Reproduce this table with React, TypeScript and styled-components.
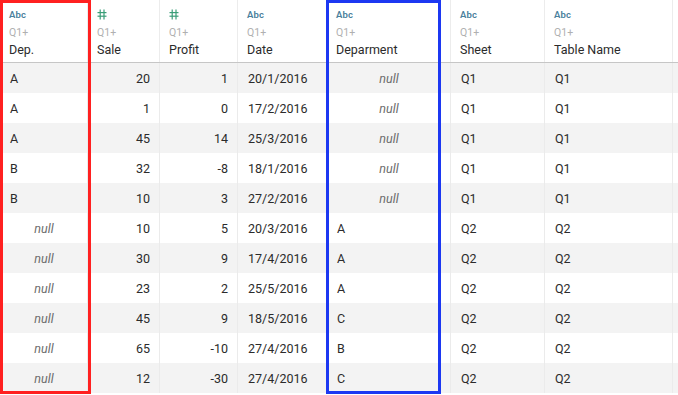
import styled, { createGlobalStyle } from "styled-components"

const GlobalStyle = createGlobalStyle`
  html, body {
    margin: 0;
    padding: 0;
    background: #ffffff;
    overflow: hidden;
  }
  body {
    font-family: Roboto, "Liberation Sans", Arial, sans-serif;
  }
`

const columnWidths = "88px 72px 78px 89px 124px 94px 128px 1fr"

type Kind = "text" | "number"

interface Column {
  name: string
  kind: Kind
}

const columns: Column[] = [
  { name: "Dep.", kind: "text" },
  { name: "Sale", kind: "number" },
  { name: "Profit", kind: "number" },
  { name: "Date", kind: "text" },
  { name: "Deparment", kind: "text" },
  { name: "Sheet", kind: "text" },
  { name: "Table Name", kind: "text" },
]

const rows: (string | null)[][] = [
  ["A", "20", "1", "20/1/2016", null, "Q1", "Q1"],
  ["A", "1", "0", "17/2/2016", null, "Q1", "Q1"],
  ["A", "45", "14", "25/3/2016", null, "Q1", "Q1"],
  ["B", "32", "-8", "18/1/2016", null, "Q1", "Q1"],
  ["B", "10", "3", "27/2/2016", null, "Q1", "Q1"],
  [null, "10", "5", "20/3/2016", "A", "Q2", "Q2"],
  [null, "30", "9", "17/4/2016", "A", "Q2", "Q2"],
  [null, "23", "2", "25/5/2016", "A", "Q2", "Q2"],
  [null, "45", "9", "18/5/2016", "C", "Q2", "Q2"],
  [null, "65", "-10", "27/4/2016", "B", "Q2", "Q2"],
  [null, "12", "-30", "27/4/2016", "C", "Q2", "Q2"],
]

const Page = styled.div`
  position: relative;
  width: 678px;
  height: 395px;
  overflow: hidden;
`

const HeaderRow = styled.div`
  display: grid;
  grid-template-columns: ${columnWidths};
  height: 62px;
  border-bottom: 1px solid #c6c6c6;
  background: #ffffff;
`

const HeaderCell = styled.div<{ $last?: boolean }>`
  display: flex;
  flex-direction: column;
  padding: 8px 0 0 9px;
  border-right: ${(p) => (p.$last ? "none" : "1px solid #ececec")};
`

const TypeLabel = styled.div`
  height: 12px;
  display: flex;
  align-items: center;
  font-size: 9.5px;
  font-weight: 600;
  letter-spacing: 0.2px;
  color: #4a7f9c;
`

const Role = styled.div`
  margin-top: 7px;
  font-size: 10.5px;
  line-height: 12px;
  color: #b0b0b0;
`

const FieldName = styled.div`
  margin-top: 3px;
  font-size: 12.5px;
  line-height: 16px;
  color: #2b2b2b;
`

const Row = styled.div<{ $shaded: boolean }>`
  display: grid;
  grid-template-columns: ${columnWidths};
  height: 30px;
  background: ${(p) => (p.$shaded ? "#f3f3f3" : "#ffffff")};
`

const Cell = styled.div<{ $align: "left" | "right" | "center"; $last?: boolean }>`
  display: flex;
  align-items: center;
  justify-content: ${(p) =>
    p.$align === "right" ? "flex-end" : p.$align === "center" ? "center" : "flex-start"};
  padding: 0 9px 0 10px;
  font-size: 12.5px;
  color: #2b2b2b;
  border-right: ${(p) => (p.$last ? "none" : "1px solid #ebebeb")};
  white-space: nowrap;
`

const Null = styled.span`
  font-style: italic;
  color: #6c6c6c;
`

const Highlight = styled.div<{ $color: string; $left: number; $width: number }>`
  position: absolute;
  top: 0;
  left: ${(p) => p.$left}px;
  width: ${(p) => p.$width}px;
  height: 394px;
  box-sizing: border-box;
  border: 3px solid ${(p) => p.$color};
  pointer-events: none;
`

const HashIcon = () => (
  <svg width="10" height="11" viewBox="0 0 10 11">
    <g stroke="#3a9e78" strokeWidth="1.2" fill="none">
      <line x1="3.2" y1="0.5" x2="3.2" y2="10.5" />
      <line x1="7" y1="0.5" x2="7" y2="10.5" />
      <line x1="0.5" y1="3.6" x2="9.5" y2="3.6" />
      <line x1="0.5" y1="7.2" x2="9.5" y2="7.2" />
    </g>
  </svg>
)

const App = () => {
  return (
    <Page>
      <GlobalStyle />
      <HeaderRow>
        {columns.map((c) => (
          <HeaderCell key={c.name}>
            <TypeLabel>{c.kind === "number" ? <HashIcon /> : "Abc"}</TypeLabel>
            <Role>Q1+</Role>
            <FieldName>{c.name}</FieldName>
          </HeaderCell>
        ))}
        <HeaderCell $last />
      </HeaderRow>
      {rows.map((r, i) => (
        <Row key={i} $shaded={i % 2 === 0}>
          {r.map((v, j) => (
            <Cell
              key={j}
              $align={v === null ? "center" : columns[j].kind === "number" ? "right" : "left"}
            >
              {v === null ? <Null>null</Null> : v}
            </Cell>
          ))}
          <Cell $align="left" $last />
        </Row>
      ))}
      <Highlight $color="#ff2020" $left={0} $width={91} />
      <Highlight $color="#1c38f2" $left={326} $width={115} />
    </Page>
  )
}

export default App
